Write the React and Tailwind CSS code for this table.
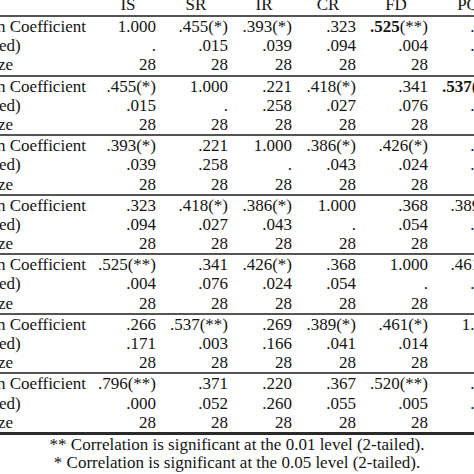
const headers = ["IS", "SR", "IR", "CR", "FD", "PQ"];
const widths = ["w-[64px]", "w-[72px]", "w-[64px]", "w-[64px]", "w-[72px]", "w-[72px]"];

// each group: coefficient row, sig row, bold column index
const groups = [
    { r: ["1.000", ".455(*)", ".393(*)", ".323", ".525(**)", ".266"], s: [".", ".015", ".039", ".094", ".004", ".171"], bold: 4 },
    { r: [".455(*)", "1.000", ".221", ".418(*)", ".341", ".537(**)"], s: [".015", ".", ".258", ".027", ".076", ".003"], bold: 5 },
    { r: [".393(*)", ".221", "1.000", ".386(*)", ".426(*)", ".269"], s: [".039", ".258", ".", ".043", ".024", ".166"] },
    { r: [".323", ".418(*)", ".386(*)", "1.000", ".368", ".389(*)"], s: [".094", ".027", ".043", ".", ".054", ".041"] },
    { r: [".525(**)", ".341", ".426(*)", ".368", "1.000", ".461(*)"], s: [".004", ".076", ".024", ".054", ".", ".014"] },
    { r: [".266", ".537(**)", ".269", ".389(*)", ".461(*)", "1.000"], s: [".171", ".003", ".166", ".041", ".014", "."] },
    { r: [".796(**)", ".371", ".220", ".367", ".520(**)", ".374"], s: [".000", ".052", ".260", ".055", ".005", ".050"] },
];

function Value({ text, bold }) {
    if (!bold) return text;
    const i = text.indexOf("(");
    return (
        <>
            <span className="font-bold">{text.slice(0, i)}</span>
            {text.slice(i)}
        </>
    );
}

function Row({ label, values, bold }) {
    return (
        <div className="flex h-[19.2px] leading-[19.2px] whitespace-nowrap">
            <div className="w-[96px] overflow-hidden">{label}</div>
            {values.map((v, i) => (
                <div key={i} className={`${widths[i]} text-right pr-1`}>
                    <Value text={v} bold={bold === i} />
                </div>
            ))}
        </div>
    );
}

export default function App() {
    return (
        <div className="w-[474px] h-[474px] overflow-hidden bg-white text-[17px] text-[#141414] font-['Liberation_Serif',serif]">
            <div className="w-[504px]">
                <div className="flex h-[15px] leading-[10.5px] whitespace-nowrap">
                    <div className="w-[96px]" />
                    {headers.map((h, i) => (
                        <div key={h} className={`${widths[i]} text-center`}>{h}</div>
                    ))}
                </div>
                <div className="border-b-[3px] border-[#2a2a2a]">
                    {groups.map((g, i) => (
                        <div key={i} className="border-t-2 border-[#555555]">
                            <Row label={<span className="block -ml-[3px]">n Coefficient</span>} values={g.r} bold={g.bold} />
                            <Row label={<span className="block -ml-[1px]">ed)</span>} values={g.s} />
                            <Row label={<span className="block -ml-[2px]">ze</span>} values={Array(6).fill("28")} />
                        </div>
                    ))}
                </div>
            </div>
            <div className="pt-[1px] text-center leading-[18.5px] whitespace-nowrap">
                <p>** Correlation is significant at the 0.01 level (2-tailed).</p>
                <p>* Correlation is significant at the 0.05 level (2-tailed).</p>
            </div>
        </div>
    );
}
